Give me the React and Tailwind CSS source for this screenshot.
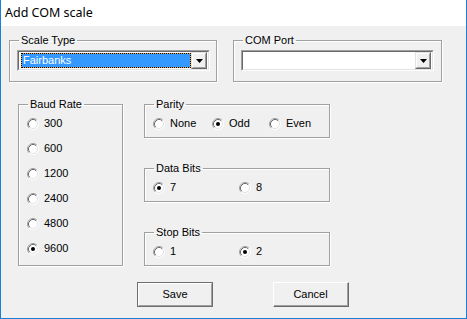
import React from "react";

const font = { fontFamily: '"Liberation Sans", Arial, sans-serif' };

function Radio({ checked }) {
  return (
    <svg width="12" height="12" viewBox="0 0 12 12" className="shrink-0">
      <circle cx="6" cy="6" r="5" fill="#fff" />
      <path d="M2.11 9.89 A5.5 5.5 0 0 1 9.89 2.11" stroke="#a0a0a0" fill="none" strokeWidth="1" />
      <path d="M9.89 2.11 A5.5 5.5 0 0 1 2.11 9.89" stroke="#ffffff" fill="none" strokeWidth="1" />
      <path d="M2.82 9.18 A4.5 4.5 0 0 1 9.18 2.82" stroke="#696969" fill="none" strokeWidth="1" />
      <path d="M9.18 2.82 A4.5 4.5 0 0 1 2.82 9.18" stroke="#e3e3e3" fill="none" strokeWidth="1" />
      {checked && <circle cx="6" cy="6" r="2" fill="#000" />}
    </svg>
  );
}

function RadioItem({ label, checked, w }) {
  return (
    <div className={`flex items-center gap-[5px] h-[13px] ${w || ""}`}>
      <Radio checked={checked} />
      <span className="text-[11px] leading-[13px] text-black">{label}</span>
    </div>
  );
}

function Group({ label, className, children }) {
  return (
    <fieldset
      className={`border border-[#a0a0a0] shadow-[inset_1px_1px_0_#fff,1px_1px_0_#fff] p-0 m-0 min-w-0 ${className}`}
    >
      <legend className="ml-[9px] px-[2px] text-[11px] leading-[12px] text-black">{label}</legend>
      {children}
    </fieldset>
  );
}

function Combo({ value }) {
  return (
    <div className="w-[193px] h-[21px] border-t border-l border-t-[#a0a0a0] border-l-[#a0a0a0] border-b border-r border-b-white border-r-white">
      <div className="w-full h-full border-t border-l border-t-[#696969] border-l-[#696969] border-b border-r border-b-[#e3e3e3] border-r-[#e3e3e3] bg-white flex items-center p-[1px]">
        <div className="flex-1 h-[15px] pl-[1px]">
          {value ? (
            <div className="h-full bg-[#e0a040] border border-dotted border-black">
              <div className="h-full bg-[#3399ff] text-white text-[11px] leading-[13px] pl-[1px]">{value}</div>
            </div>
          ) : null}
        </div>
        <div className="w-[16px] h-[17px] border-t border-l border-t-[#e3e3e3] border-l-[#e3e3e3] border-b border-r border-b-[#696969] border-r-[#696969]">
          <div className="w-full h-full bg-[#f0f0f0] border-t border-l border-t-white border-l-white border-b border-r border-b-[#a0a0a0] border-r-[#a0a0a0] flex items-center justify-center">
            <svg width="7" height="4" viewBox="0 0 7 4">
              <path d="M0 0 H7 L3.5 4 Z" fill="#000" />
            </svg>
          </div>
        </div>
      </div>
    </div>
  );
}

function Button({ label, isDefault }) {
  return (
    <div
      className={`w-[76px] h-[25px] ${
        isDefault ? "border border-[#6e6e6e]" : "border-t border-l border-t-white border-l-white border-b border-r border-b-[#696969] border-r-[#696969]"
      }`}
    >
      <div
        className={`w-full h-full flex items-center justify-center text-[11px] text-black bg-[#f0f0f0] ${
          isDefault
            ? "border-t border-l border-t-white border-l-white border-b border-r border-b-[#a0a0a0] border-r-[#a0a0a0]"
            : "border-b border-r border-b-[#a0a0a0] border-r-[#a0a0a0]"
        }`}
      >
        {label}
      </div>
    </div>
  );
}

export default function App() {
  return (
    <div className="w-[467px] h-[319px] border-x border-b border-[#1a7fd6] bg-[#f0f0f0] flex flex-col overflow-hidden" style={font}>
      <div className="h-[26px] bg-white flex items-center pl-[4px] shrink-0">
        <span className="text-[12.5px] text-black" style={{ fontFamily: '"Noto Sans", "Open Sans", sans-serif' }}>
          Add COM scale
        </span>
      </div>

      <div className="flex gap-[16px] ml-[8px] mt-[8px]">
        <Group label="Scale Type" className="w-[208px] h-[48px]">
          <div className="pl-[7px] pt-[4px]">
            <Combo value="Fairbanks" />
          </div>
        </Group>
        <Group label="COM Port" className="w-[209px] h-[48px]">
          <div className="pl-[7px] pt-[4px]">
            <Combo value="" />
          </div>
        </Group>
      </div>

      <div className="flex ml-[17px] mt-[16px]">
        <Group label="Baud Rate" className="w-[105px] h-[168px]">
          <div className="flex flex-col gap-[12px] pl-[8px] pt-[7px]">
            <RadioItem label="300" />
            <RadioItem label="600" />
            <RadioItem label="1200" />
            <RadioItem label="2400" />
            <RadioItem label="4800" />
            <RadioItem label="9600" checked />
          </div>
        </Group>

        <div className="flex flex-col gap-[24px] ml-[21px]">
          <Group label="Parity" className="w-[186px] h-[40px]">
            <div className="flex pl-[8px] pt-[7px]">
              <RadioItem label="None" w="w-[59px]" />
              <RadioItem label="Odd" checked w="w-[57px]" />
              <RadioItem label="Even" />
            </div>
          </Group>
          <Group label="Data Bits" className="w-[186px] h-[40px]">
            <div className="flex pl-[8px] pt-[7px]">
              <RadioItem label="7" checked w="w-[86px]" />
              <RadioItem label="8" />
            </div>
          </Group>
          <Group label="Stop Bits" className="w-[186px] h-[40px]">
            <div className="flex pl-[8px] pt-[7px]">
              <RadioItem label="1" w="w-[86px]" />
              <RadioItem label="2" checked />
            </div>
          </Group>
        </div>
      </div>

      <div className="flex gap-[60px] ml-[136px] mt-[16px]">
        <Button label="Save" isDefault />
        <Button label="Cancel" />
      </div>
    </div>
  );
}
